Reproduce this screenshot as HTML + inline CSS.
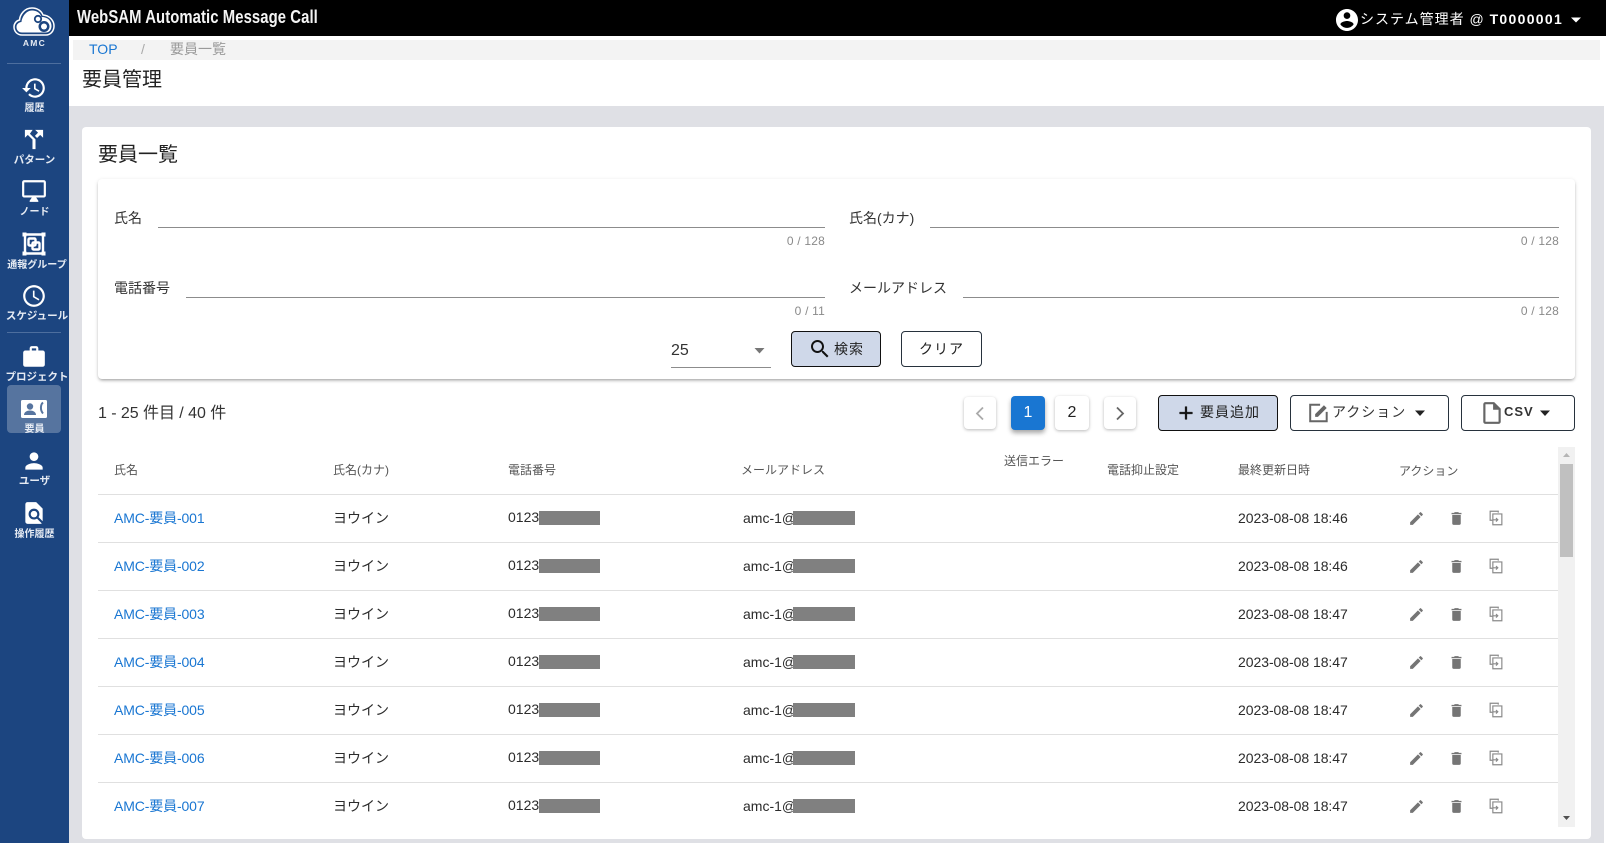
<!DOCTYPE html>
<html lang="ja"><head><meta charset="utf-8"><title>要員管理</title>
<style>
*{box-sizing:border-box}
html,body{margin:0;padding:0;width:1606px;height:843px;overflow:hidden;background:#fff;font-family:"Liberation Sans","Noto Sans CJK JP",sans-serif;color:#222}
.a{position:absolute;white-space:nowrap}
svg{position:absolute;display:block}
.nav{position:absolute;left:0;width:69px;text-align:center;color:#e6ebf3;font-size:10px;font-weight:700;line-height:12px;white-space:nowrap}
.line{position:absolute;height:1px;background:#8c8c8c}
.lbl{position:absolute;font-size:14px;line-height:20px;color:#333;white-space:nowrap}
.cnt{position:absolute;font-size:12px;line-height:14px;color:#8a8a8a;text-align:right;white-space:nowrap;letter-spacing:.2px}
.btn{position:absolute;border:1px solid #27323d;border-radius:4px;background:#fff;font-size:14px;letter-spacing:1px;line-height:34px;white-space:nowrap}
.btn.p{background:#cfd8e9;border-color:#111}
.pg{position:absolute;background:#fff;border-radius:4px;box-shadow:0 1px 3px rgba(0,0,0,.28);text-align:center;font-size:16px;line-height:34px}
.th{position:absolute;font-size:12px;color:#555;line-height:16px;white-space:nowrap}
.row{position:absolute;left:98px;width:1460px;height:48px;border-bottom:1px solid #e0e0e0}
.row span{position:absolute;top:14px;font-size:14px;line-height:18px;white-space:nowrap;color:#2b2b2b}
.row span.l{left:16px;color:#1976d2;letter-spacing:-.13px}
.row span.k{left:235px}
.row span.t{left:410px;top:13px}
.row span.m{left:645px}
.row span.d{left:1140px;letter-spacing:-.05px}
.row i{position:absolute;top:16px;height:14px;background:#808080;display:block}
.row svg{top:15px;width:17px;height:17px}
.row svg:nth-of-type(1){left:1310px}
.row svg:nth-of-type(2){left:1350px}
.row svg:nth-of-type(3){left:1389px;top:14px;width:18px;height:18px}
</style></head><body>

<div class="a" style="left:0;top:0;width:69px;height:843px;background:#1c4580"></div>
<div class="a" style="left:69px;top:0;width:1537px;height:36px;background:#000"></div>
<div class="a" style="left:69px;top:36px;width:1535px;height:70px;background:#fff"></div>
<div class="a" style="left:69px;top:106px;width:1535px;height:737px;background:#dfe0e5"></div>
<div class="a" style="left:73px;top:40px;width:1527px;height:20px;background:#f3f3f3"></div>

<svg style="left:13px;top:7px" width="42" height="30" viewBox="0 0 42 30"><path d="M9 28C4 28 1 24 1 20c0-3.500 2.500-6.500 5.500-7C7 7.500 11.500 1 19 1c5.500 0 9.500 3 11 7C36.500 8.500 41 13.500 41 19c0 5-3.500 9-8 9z" fill="none" stroke="#fff" stroke-width="1.500"/><path d="M9 25.500C5.500 25.500 3.500 23 3.500 20c0-3 2.500-4.800 5-5C9 10 13 3.500 19 3.500c5 0 8 2.500 9.500 6.500C35 10 38.500 14 38.500 19c0 3.500-2 6.500-5.500 6.500z" fill="#fff"/><circle cx="31" cy="19.500" r="5.500" fill="#1c4580"/><circle cx="31" cy="19.500" r="3" fill="#fff"/><circle cx="25" cy="12" r="3.200" fill="none" stroke="#1c4580" stroke-width="1.800"/></svg>
<div class="nav" style="top:37px;font-size:8.500px;letter-spacing:1.300px">AMC</div>
<div class="a" style="left:7px;top:63px;width:54px;height:1px;background:#4d6e9e"></div>

<svg style="left:21px;top:75px" width="26" height="26" viewBox="0 0 24 24" fill="#fff"><path d="M13 3c-4.970 0-9 4.030-9 9H1l3.890 3.890.070.140L9 12H6c0-3.870 3.130-7 7-7s7 3.130 7 7-3.130 7-7 7c-1.930 0-3.680-.79-4.940-2.060l-1.420 1.420C8.270 19.990 10.510 21 13 21c4.970 0 9-4.030 9-9s-4.030-9-9-9zm-1 5v5l4.280 2.540.72-1.210-3.500-2.080V8H12z"/></svg>
<div class="nav" style="top:103px">履歴</div>
<svg style="left:21px;top:127px" width="26" height="26" viewBox="0 0 24 24" fill="#fff" stroke="#fff" stroke-width=".8"><path d="M14 3l2.290 2.290-2.880 2.880 1.420 1.420 2.880-2.880L20 9V3zm-4 0H4v6l2.290-2.290 4.710 4.700V20h2v-8.410l-5.290-5.300z"/></svg>
<div class="nav" style="top:154px;font-size:10.500px">パターン</div>
<svg style="left:21px;top:178px" width="26" height="26" viewBox="0 0 24 24" fill="#fff"><path d="M21 2H3c-1.100 0-2 .9-2 2v12c0 1.100.9 2 2 2h7l-2 3v1h8v-1l-2-3h7c1.100 0 2-.9 2-2V4c0-1.100-.9-2-2-2zm0 14H3V4h18v12z"/></svg>
<div class="nav" style="top:207px">ノード</div>
<svg style="left:22px;top:232px" width="24" height="24" viewBox="0 0 24 24" fill="none" stroke="#fff" stroke-width="2.400"><path d="M3 2.500h18M3 21.500h18M3 2v20M21 2v20"/><path d="M0.500 0.500h4v4h-4zM19.500 0.500h4v4h-4zM0.500 19.500h4v4h-4zM19.500 19.500h4v4h-4z" fill="#fff" stroke="none"/><rect x="6.500" y="6.500" width="7" height="7" rx="1"/><rect x="10.500" y="10.500" width="7" height="7" rx="1"/></svg>
<div class="nav" style="top:260px;left:2px;width:70px;font-size:10px">通報グループ</div>
<svg style="left:21px;top:283px" width="26" height="26" viewBox="0 0 24 24" fill="#fff"><path d="M11.990 2C6.470 2 2 6.480 2 12s4.470 10 9.990 10C17.520 22 22 17.520 22 12S17.520 2 11.990 2zM12 20c-4.420 0-8-3.580-8-8s3.580-8 8-8 8 3.580 8 8-3.580 8-8 8zm.5-13H11v6l5.250 3.150.75-1.230-4.500-2.670z"/></svg>
<div class="nav" style="top:310px;left:2px;width:70px;font-size:10.500px">スケジュール</div>
<div class="a" style="left:7px;top:332px;width:54px;height:1px;background:#4d6e9e"></div>

<svg style="left:21px;top:344px" width="26" height="26" viewBox="0 0 24 24" fill="#fff"><path d="M20 6h-4V4c0-1.110-.89-2-2-2h-4c-1.110 0-2 .89-2 2v2H4c-1.110 0-1.990.89-1.990 2L2 19c0 1.110.89 2 2 2h16c1.110 0 2-.89 2-2V8c0-1.110-.89-2-2-2zm-6 0h-4V4h4v2z"/></svg>
<div class="nav" style="top:371px;left:2px;width:70px;font-size:10.500px">プロジェクト</div>
<div class="a" style="left:7px;top:385px;width:54px;height:48px;background:#56749f;border-radius:4px"></div>
<svg style="left:21px;top:400px" width="26" height="18" viewBox="0 0 26 18"><rect width="26" height="18" rx="1.500" fill="#fff"/><circle cx="9" cy="6.500" r="3.200" fill="#56749f"/><path d="M3 15c0-3 3-4.500 6-4.500s6 1.500 6 4.500z" fill="#56749f"/><path d="M22 2.500c-2.500 2-3 7.500 0 11" fill="none" stroke="#56749f" stroke-width="2"/></svg>
<div class="nav" style="top:424px">要員</div>
<svg style="left:21px;top:448px" width="26" height="26" viewBox="0 0 24 24" fill="#fff"><path d="M12 12c2.210 0 4-1.790 4-4s-1.790-4-4-4-4 1.790-4 4 1.790 4 4 4zm0 2c-2.670 0-8 1.340-8 4v2h16v-2c0-2.660-5.330-4-8-4z"/></svg>
<div class="nav" style="top:475px;font-size:10.500px">ユーザ</div>
<svg style="left:21px;top:500px" width="26" height="26" viewBox="0 0 24 24" fill="#fff"><path d="M20 19.590V8l-6-6H6c-1.100 0-1.990.9-1.990 2L4 20c0 1.100.89 2 1.990 2H18c.45 0 .85-.15 1.190-.4l-4.430-4.430c-.8.52-1.740.83-2.760.83-2.760 0-5-2.240-5-5s2.240-5 5-5 5 2.240 5 5c0 1.020-.31 1.960-.83 2.750L20 19.590zM9 13c0 1.660 1.340 3 3 3s3-1.340 3-3-1.340-3-3-3-3 1.340-3 3z"/></svg>
<div class="nav" style="top:529px">操作履歴</div>

<div class="a" style="left:77px;top:6px;font-size:18px;line-height:23px;font-weight:700;color:#f4f4f4;transform:scaleX(.825);transform-origin:0 0;letter-spacing:.1px">WebSAM Automatic Message Call</div>
<svg style="left:1336px;top:9px" width="22" height="22" viewBox="2 2 20 20" fill="#fff"><path d="M12 2C6.480 2 2 6.480 2 12s4.480 10 10 10 10-4.480 10-10S17.520 2 12 2zm0 3c1.660 0 3 1.340 3 3s-1.340 3-3 3-3-1.340-3-3 1.340-3 3-3zm0 14.200c-2.500 0-4.710-1.280-6-3.220.03-1.990 4-3.080 6-3.080 1.990 0 5.970 1.090 6 3.080-1.290 1.940-3.500 3.220-6 3.220z"/></svg>
<div class="a" style="left:1360px;top:9px;font-size:14px;line-height:20px;color:#fff;letter-spacing:1px">システム管理者 @ <b style="letter-spacing:1.300px">T0000001</b></div>
<svg style="left:1570px;top:16px" width="12" height="8" viewBox="0 0 12 8"><path d="M1 1.500h10L6 6.500z" fill="#fff"/></svg>

<div class="a" style="left:89px;top:39px;font-size:14px;line-height:20px;color:#1976d2">TOP</div>
<div class="a" style="left:141px;top:39px;font-size:14px;line-height:20px;color:#aaa">/</div>
<div class="a" style="left:170px;top:39px;font-size:14px;line-height:20px;color:#9a9a9a">要員一覧</div>
<div class="a" style="left:82px;top:66px;font-size:20px;line-height:28px;color:#222">要員管理</div>

<div class="a" style="left:82px;top:127px;width:1509px;height:712px;background:#fff;border-radius:4px"></div>
<div class="a" style="left:98px;top:141px;font-size:20px;line-height:28px;color:#222">要員一覧</div>
<div class="a" style="left:98px;top:179px;width:1477px;height:200px;background:#fff;border-radius:4px;box-shadow:0 2px 3px -1px rgba(0,0,0,.35),0 1px 5px rgba(0,0,0,.1)"></div>

<div class="lbl" style="left:114px;top:208px">氏名</div>
<div class="line" style="left:158px;top:227px;width:667px"></div>
<div class="cnt" style="left:725px;top:234px;width:100px">0 / 128</div>
<div class="lbl" style="left:849px;top:208px">氏名(カナ)</div>
<div class="line" style="left:930px;top:227px;width:629px"></div>
<div class="cnt" style="left:1459px;top:234px;width:100px">0 / 128</div>
<div class="lbl" style="left:114px;top:278px">電話番号</div>
<div class="line" style="left:186px;top:297px;width:639px"></div>
<div class="cnt" style="left:725px;top:304px;width:100px">0 / 11</div>
<div class="lbl" style="left:849px;top:278px">メールアドレス</div>
<div class="line" style="left:963px;top:297px;width:596px"></div>
<div class="cnt" style="left:1459px;top:304px;width:100px">0 / 128</div>

<div class="a" style="left:671px;top:341px;font-size:16px;line-height:20px;color:#333">25</div>
<svg style="left:754px;top:348px" width="12" height="6" viewBox="0 0 12 6"><path d="M.5 0h10L5.500 5.500z" fill="#777"/></svg>
<div class="line" style="left:671px;top:367px;width:100px"></div>
<div class="btn p" style="left:791px;top:331px;width:90px;height:36px"><svg style="left:16px;top:5px" width="24" height="24" viewBox="0 0 24 24" fill="#111"><path d="M15.500 14h-.79l-.28-.27C15.410 12.590 16 11.110 16 9.500 16 5.910 13.090 3 9.500 3S3 5.910 3 9.500 5.910 16 9.500 16c1.610 0 3.090-.59 4.230-1.570l.27.28v.79l5 4.990L20.490 19l-4.990-5zm-6 0C7.010 14 5 11.990 5 9.500S7.010 5 9.500 5 14 7.010 14 9.500 11.990 14 9.500 14z"/></svg><span style="position:absolute;left:42px;top:0">検索</span></div>
<div class="btn" style="left:901px;top:331px;width:81px;height:36px;text-align:center">クリア</div>

<div class="a" style="left:98px;top:403px;font-size:16px;line-height:22px;color:#333;letter-spacing:-.05px">1 - 25 件目 / 40 件</div>

<div class="pg" style="left:964px;top:397px;width:32px;height:32px"><svg style="left:10px;top:9px" width="12" height="15" viewBox="0 0 12 15"><path d="M9 1.500L3 7.500l6 6" fill="none" stroke="#aaa" stroke-width="1.800"/></svg></div>
<div class="pg" style="left:1011px;top:396px;width:34px;height:34px;background:#1976d2;color:#fff;box-shadow:0 3px 5px rgba(0,0,0,.35)">1</div>
<div class="pg" style="left:1055px;top:396px;width:34px;height:34px">2</div>
<div class="pg" style="left:1104px;top:397px;width:32px;height:32px"><svg style="left:10px;top:9px" width="12" height="15" viewBox="0 0 12 15"><path d="M3 1.500l6 6-6 6" fill="none" stroke="#666" stroke-width="1.800"/></svg></div>

<div class="btn p" style="left:1158px;top:395px;width:120px;height:36px"><svg style="left:16px;top:6px" width="22" height="22" viewBox="0 0 24 24" fill="#111" stroke="#111" stroke-width=".4"><path d="M19 13h-6v6h-2v-6H5v-2h6V5h2v6h6v2z"/></svg><span style="position:absolute;left:41px;top:-1px">要員追加</span></div>
<div class="btn" style="left:1290px;top:395px;width:159px;height:36px"><svg style="left:17px;top:6px" width="22" height="22" viewBox="0 0 20 20"><path d="M11 2.500H2v15h15V9" fill="none" stroke="#666" stroke-width="1.800"/><path d="M6.500 13.500v-2.500l8-8 2.500 2.500-8 8z" fill="#666"/></svg><span style="position:absolute;left:41px;top:-1px;color:#333">アクション</span><svg style="left:123px;top:14px" width="12" height="7" viewBox="0 0 12 7"><path d="M1 .5h10L6 6z" fill="#222"/></svg></div>
<div class="btn" style="left:1461px;top:395px;width:114px;height:36px"><svg style="left:19px;top:5px" width="22" height="24" viewBox="4 1 16 22"><path d="M14 2H6c-1.100 0-1.990.9-1.990 2L4 20c0 1.100.89 2 1.990 2H18c1.100 0 2-.9 2-2V8l-6-6zM6 20V4h7v5h5v11H6z" fill="#666"/></svg><span style="position:absolute;left:42px;top:-1px;font-weight:700;font-size:13px;color:#333">CSV</span><svg style="left:77px;top:14px" width="12" height="7" viewBox="0 0 12 7"><path d="M1 .5h10L6 6z" fill="#222"/></svg></div>

<div class="th" style="left:114px;top:462px">氏名</div>
<div class="th" style="left:333px;top:462px">氏名(カナ)</div>
<div class="th" style="left:508px;top:462px">電話番号</div>
<div class="th" style="left:741px;top:462px">メールアドレス</div>
<div class="th" style="left:1004px;top:453px">送信エラー</div>
<div class="th" style="left:1107px;top:462px">電話抑止設定</div>
<div class="th" style="left:1238px;top:462px">最終更新日時</div>
<div class="th" style="left:1399px;top:463px">アクション</div>
<div class="a" style="left:98px;top:494px;width:1460px;height:1px;background:#e0e0e0"></div>

<div class="row" style="top:495px"><span class="l">AMC-要員-001</span><span class="k">ヨウイン</span><span class="t">0123</span><i style="left:441px;width:61px"></i><span class="m">amc-1@</span><i style="left:695px;width:62px"></i><span class="d">2023-08-08 18:46</span><svg viewBox="0 0 24 24" fill="#757575"><path d="M3 17.250V21h3.750L17.810 9.940l-3.750-3.750L3 17.250zM20.710 7.040c.39-.39.39-1.020 0-1.410l-2.340-2.340c-.39-.39-1.020-.39-1.410 0l-1.830 1.830 3.750 3.750 1.830-1.830z"/></svg><svg viewBox="0 0 24 24" fill="#757575"><path d="M6 19c0 1.100.9 2 2 2h8c1.100 0 2-.9 2-2V7H6v12zM19 4h-3.500l-1-1h-5l-1 1H5v2h14V4z"/></svg><svg viewBox="0 0 20 20" fill="none" stroke="#8a8a8a" stroke-width="1.300"><path d="M12.500 4V2.500h-9v10H6"/><path d="M6.500 5.500h10v12h-10zM6.500 12h5M10 10l2 2-2 2"/></svg></div>
<div class="row" style="top:543px"><span class="l">AMC-要員-002</span><span class="k">ヨウイン</span><span class="t">0123</span><i style="left:441px;width:61px"></i><span class="m">amc-1@</span><i style="left:695px;width:62px"></i><span class="d">2023-08-08 18:46</span><svg viewBox="0 0 24 24" fill="#757575"><path d="M3 17.250V21h3.750L17.810 9.940l-3.750-3.750L3 17.250zM20.710 7.040c.39-.39.39-1.020 0-1.410l-2.340-2.340c-.39-.39-1.020-.39-1.410 0l-1.830 1.830 3.750 3.750 1.830-1.830z"/></svg><svg viewBox="0 0 24 24" fill="#757575"><path d="M6 19c0 1.100.9 2 2 2h8c1.100 0 2-.9 2-2V7H6v12zM19 4h-3.500l-1-1h-5l-1 1H5v2h14V4z"/></svg><svg viewBox="0 0 20 20" fill="none" stroke="#8a8a8a" stroke-width="1.300"><path d="M12.500 4V2.500h-9v10H6"/><path d="M6.500 5.500h10v12h-10zM6.500 12h5M10 10l2 2-2 2"/></svg></div>
<div class="row" style="top:591px"><span class="l">AMC-要員-003</span><span class="k">ヨウイン</span><span class="t">0123</span><i style="left:441px;width:61px"></i><span class="m">amc-1@</span><i style="left:695px;width:62px"></i><span class="d">2023-08-08 18:47</span><svg viewBox="0 0 24 24" fill="#757575"><path d="M3 17.250V21h3.750L17.810 9.940l-3.750-3.750L3 17.250zM20.710 7.040c.39-.39.39-1.020 0-1.410l-2.340-2.340c-.39-.39-1.020-.39-1.410 0l-1.830 1.830 3.750 3.750 1.830-1.830z"/></svg><svg viewBox="0 0 24 24" fill="#757575"><path d="M6 19c0 1.100.9 2 2 2h8c1.100 0 2-.9 2-2V7H6v12zM19 4h-3.500l-1-1h-5l-1 1H5v2h14V4z"/></svg><svg viewBox="0 0 20 20" fill="none" stroke="#8a8a8a" stroke-width="1.300"><path d="M12.500 4V2.500h-9v10H6"/><path d="M6.500 5.500h10v12h-10zM6.500 12h5M10 10l2 2-2 2"/></svg></div>
<div class="row" style="top:639px"><span class="l">AMC-要員-004</span><span class="k">ヨウイン</span><span class="t">0123</span><i style="left:441px;width:61px"></i><span class="m">amc-1@</span><i style="left:695px;width:62px"></i><span class="d">2023-08-08 18:47</span><svg viewBox="0 0 24 24" fill="#757575"><path d="M3 17.250V21h3.750L17.810 9.940l-3.750-3.750L3 17.250zM20.710 7.040c.39-.39.39-1.020 0-1.410l-2.340-2.340c-.39-.39-1.020-.39-1.410 0l-1.830 1.830 3.750 3.750 1.830-1.830z"/></svg><svg viewBox="0 0 24 24" fill="#757575"><path d="M6 19c0 1.100.9 2 2 2h8c1.100 0 2-.9 2-2V7H6v12zM19 4h-3.500l-1-1h-5l-1 1H5v2h14V4z"/></svg><svg viewBox="0 0 20 20" fill="none" stroke="#8a8a8a" stroke-width="1.300"><path d="M12.500 4V2.500h-9v10H6"/><path d="M6.500 5.500h10v12h-10zM6.500 12h5M10 10l2 2-2 2"/></svg></div>
<div class="row" style="top:687px"><span class="l">AMC-要員-005</span><span class="k">ヨウイン</span><span class="t">0123</span><i style="left:441px;width:61px"></i><span class="m">amc-1@</span><i style="left:695px;width:62px"></i><span class="d">2023-08-08 18:47</span><svg viewBox="0 0 24 24" fill="#757575"><path d="M3 17.250V21h3.750L17.810 9.940l-3.750-3.750L3 17.250zM20.710 7.040c.39-.39.39-1.020 0-1.410l-2.340-2.340c-.39-.39-1.020-.39-1.410 0l-1.830 1.830 3.750 3.750 1.830-1.830z"/></svg><svg viewBox="0 0 24 24" fill="#757575"><path d="M6 19c0 1.100.9 2 2 2h8c1.100 0 2-.9 2-2V7H6v12zM19 4h-3.500l-1-1h-5l-1 1H5v2h14V4z"/></svg><svg viewBox="0 0 20 20" fill="none" stroke="#8a8a8a" stroke-width="1.300"><path d="M12.500 4V2.500h-9v10H6"/><path d="M6.500 5.500h10v12h-10zM6.500 12h5M10 10l2 2-2 2"/></svg></div>
<div class="row" style="top:735px"><span class="l">AMC-要員-006</span><span class="k">ヨウイン</span><span class="t">0123</span><i style="left:441px;width:61px"></i><span class="m">amc-1@</span><i style="left:695px;width:62px"></i><span class="d">2023-08-08 18:47</span><svg viewBox="0 0 24 24" fill="#757575"><path d="M3 17.250V21h3.750L17.810 9.940l-3.750-3.750L3 17.250zM20.710 7.040c.39-.39.39-1.020 0-1.410l-2.340-2.340c-.39-.39-1.020-.39-1.410 0l-1.830 1.830 3.750 3.750 1.830-1.830z"/></svg><svg viewBox="0 0 24 24" fill="#757575"><path d="M6 19c0 1.100.9 2 2 2h8c1.100 0 2-.9 2-2V7H6v12zM19 4h-3.500l-1-1h-5l-1 1H5v2h14V4z"/></svg><svg viewBox="0 0 20 20" fill="none" stroke="#8a8a8a" stroke-width="1.300"><path d="M12.500 4V2.500h-9v10H6"/><path d="M6.500 5.500h10v12h-10zM6.500 12h5M10 10l2 2-2 2"/></svg></div>
<div class="row" style="top:783px;border-bottom:0;height:44px"><span class="l">AMC-要員-007</span><span class="k">ヨウイン</span><span class="t">0123</span><i style="left:441px;width:61px"></i><span class="m">amc-1@</span><i style="left:695px;width:62px"></i><span class="d">2023-08-08 18:47</span><svg viewBox="0 0 24 24" fill="#757575"><path d="M3 17.250V21h3.750L17.810 9.940l-3.750-3.750L3 17.250zM20.710 7.040c.39-.39.39-1.020 0-1.410l-2.340-2.340c-.39-.39-1.020-.39-1.410 0l-1.830 1.830 3.750 3.750 1.830-1.830z"/></svg><svg viewBox="0 0 24 24" fill="#757575"><path d="M6 19c0 1.100.9 2 2 2h8c1.100 0 2-.9 2-2V7H6v12zM19 4h-3.500l-1-1h-5l-1 1H5v2h14V4z"/></svg><svg viewBox="0 0 20 20" fill="none" stroke="#8a8a8a" stroke-width="1.300"><path d="M12.500 4V2.500h-9v10H6"/><path d="M6.500 5.500h10v12h-10zM6.500 12h5M10 10l2 2-2 2"/></svg></div>

<div class="a" style="left:1558px;top:447px;width:17px;height:380px;background:#f1f1f1"></div>
<div class="a" style="left:1560px;top:464px;width:13px;height:93px;background:#c0c0c0"></div>
<svg style="left:1562px;top:452px" width="9" height="6" viewBox="0 0 9 6"><path d="M4.500 1L8 5H1z" fill="#b5b5b5"/></svg>
<svg style="left:1562px;top:815px" width="9" height="6" viewBox="0 0 9 6"><path d="M1 1h7L4.500 5z" fill="#505050"/></svg>
</body></html>
